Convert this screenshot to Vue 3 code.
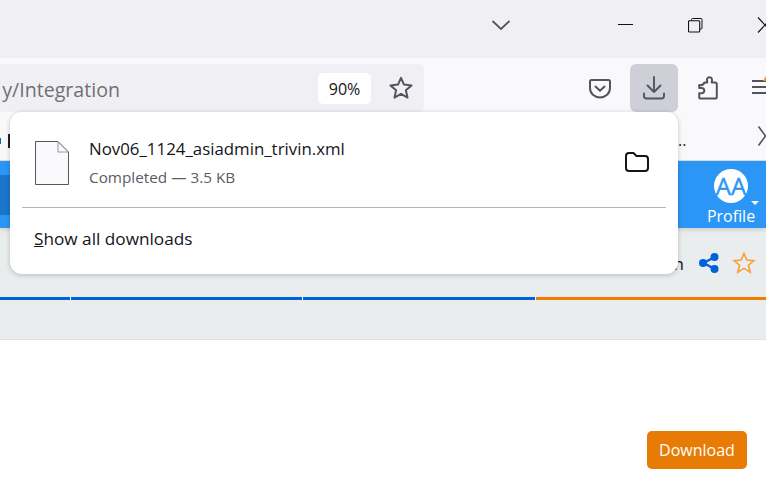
<template>
  <div class="window">
    <div class="titlebar">
      <svg class="chev" width="20" height="12" viewBox="0 0 20 12"><path d="M1.5 2 L10 10 L18.5 2" fill="none" stroke="#54545e" stroke-width="1.8"/></svg>
      <div class="min"></div>
      <svg class="restore" width="15" height="15" viewBox="0 0 15 15"><path d="M3.5 2.5 V1.5 Q3.5 .5 4.5 .5 H13 Q14 .5 14 1.5 V10 Q14 11 13 11 H12" fill="none" stroke="#111" stroke-width="1"/><rect x=".5" y="2.8" width="11.2" height="11.2" rx="1" fill="none" stroke="#111" stroke-width="1.1"/></svg>
      <svg class="close" width="16" height="16" viewBox="0 0 16 16"><path d="M1 .5 L15 15.5 M15 .5 L1 15.5" stroke="#111" stroke-width="1.1"/></svg>
    </div>

    <div class="toolbar">
      <div class="urlbar">
        <div class="urlslot"><span class="url">y/Integration</span></div>
        <span class="zoom">90%</span>
        <svg class="star" width="26" height="26" viewBox="0 0 26 26"><path d="M13 2.8 L16 9.6 L23.5 10.4 L17.9 15.3 L19.5 22.6 L13 18.9 L6.5 22.6 L8.1 15.3 L2.5 10.4 L10 9.6 Z" fill="none" stroke="#54545e" stroke-width="2" stroke-linejoin="round"/></svg>
      </div>
      <svg class="pocket" width="22" height="20" viewBox="0 0 22 20"><path d="M2.5 1 H19.5 Q21 1 21 2.5 V9 C21 14.5 16.5 18.5 11 18.5 C5.5 18.5 1 14.5 1 9 V2.5 Q1 1 2.5 1 Z" fill="none" stroke="#54545e" stroke-width="2"/><path d="M6.5 7.5 L11 11.8 L15.5 7.5" fill="none" stroke="#54545e" stroke-width="2" stroke-linecap="round" stroke-linejoin="round"/></svg>
      <div class="dl-btn">
        <svg width="22" height="24" viewBox="0 0 22 24"><path d="M11 1 V16 M4.5 9.5 L11 16 L17.5 9.5" fill="none" stroke="#54545e" stroke-width="1.9" stroke-linecap="round" stroke-linejoin="round"/><path d="M1 17.5 V20 Q1 22.5 3.5 22.5 H18.5 Q21 22.5 21 20 V17.5" fill="none" stroke="#54545e" stroke-width="1.9" stroke-linecap="round"/></svg>
      </div>
      <svg class="ext" width="20" height="24" viewBox="0 0 20 24"><path d="M6.5 6.5 H9.3 Q8 1.2 11.5 1.2 Q15 1.2 13.7 6.5 H17 Q18.8 6.5 18.8 8.3 V21 Q18.8 22.6 17 22.6 H2.8 Q1.2 22.6 1.2 21 V17.3 H3.5 Q6.3 17.3 6.3 14.6 Q6.3 12 3.5 12 H1.2 V9 Q5 9.8 6.5 6.5 Z" fill="none" stroke="#54545e" stroke-width="2" stroke-linejoin="round"/></svg>
      <div class="menu">
        <i></i><i></i><i></i>
        <b class="dot"></b>
      </div>
    </div>

    <div class="bookmarks">
      <span class="bm-dot"></span>
      <span class="bm-bar"></span>
      <span class="more">..</span>
      <svg class="next" width="10" height="22" viewBox="0 0 10 22"><path d="M1.5 1.5 L8.5 11 L1.5 20.5" fill="none" stroke="#54545e" stroke-width="1.6"/></svg>
    </div>

    <header class="appbar">
      <div class="brand"></div>
      <div class="profile">
        <div class="avatar">AA</div>
        <span class="caret"></span>
        <span class="plabel">Profile</span>
      </div>
    </header>

    <div class="subhead">
      <span class="tail">n</span>
      <svg width="22" height="22" viewBox="0 0 22 22"><path d="M16 5.5 L5.5 11 L16 16.5" fill="none" stroke="#0062d9" stroke-width="2.4"/><circle cx="16.5" cy="5" r="4" fill="#0062d9"/><circle cx="5" cy="11" r="4" fill="#0062d9"/><circle cx="16.5" cy="17" r="4" fill="#0062d9"/></svg>
      <svg class="fav" width="24" height="22" viewBox="0 0 24 22"><path d="M12 1.5 L14.8 8 L21.8 8.6 L16.5 13.2 L18.2 20.2 L12 16.4 L5.8 20.2 L7.5 13.2 L2.2 8.6 L9.2 8 Z" fill="none" stroke="#f5a23c" stroke-width="1.7" stroke-linejoin="miter"/></svg>
    </div>

    <div class="tabs">
      <span class="t1"></span><span class="t2"></span><span class="t3"></span><span class="t4"></span>
    </div>
    <div class="band"></div>

    <main class="card">
      <button class="download">Download</button>
    </main>

    <section class="panel">
      <div class="item">
        <svg class="file" width="34" height="44" viewBox="0 0 34 44"><path d="M.5 .5 H23 L33.5 11 V43.5 H.5 Z" fill="#f9f9fb" stroke="#55555c" stroke-width="1"/><path d="M23 .5 V11 H33.5" fill="none" stroke="#9a9aa0" stroke-width="1"/></svg>
        <div class="info">
          <div class="fname">Nov06_1124_asiadmin_trivin.xml</div>
          <div class="status">Completed — 3.5 KB</div>
        </div>
        <svg class="folder" width="24" height="20" viewBox="0 0 24 20"><path d="M1 4 Q1 1 4 1 H8.5 L11.5 4 H20 Q23 4 23 7 V16 Q23 19 20 19 H4 Q1 19 1 16 Z" fill="none" stroke="#15141a" stroke-width="2" stroke-linejoin="round"/></svg>
      </div>
      <div class="sep"></div>
      <div class="all"><u>S</u>how all downloads</div>
    </section>
  </div>
</template>

<script setup>
</script>

<style>
html, body { margin: 0; overflow: hidden; }
</style>

<style scoped>
.window {
  position: relative;
  width: 766px;
  height: 499px;
  overflow: hidden;
  background: #fff;
  font-family: "Open Sans", "Noto Sans", sans-serif;
  display: flex;
  flex-direction: column;
}
.titlebar {
  height: 58px;
  flex: none;
  background: #f0f0f4;
  display: flex;
  align-items: center;
  padding-bottom: 9px;
  box-sizing: border-box;
}
.chev { margin-left: 491px; flex: none; }
.min { width: 15px; height: 1px; background: #111; margin-left: 107px; margin-bottom: 1px; flex: none; }
.restore { margin-left: 55px; flex: none; margin-top: 1px; }
.close { margin-left: 54px; flex: none; }
.toolbar {
  height: 54px;
  flex: none;
  box-sizing: border-box;
  padding-top: 6px;
  background: #f9f9fb;
  display: flex;
  align-items: flex-start;
}
.urlbar {
  width: 424px;
  height: 48px;
  background: #f0f0f4;
  border-radius: 0 6px 6px 0;
  display: flex;
  align-items: center;
  flex: none;
}
.urlslot {
  width: 120px;
  display: flex;
  justify-content: flex-end;
  flex: none;
  margin-right: 198px;
}
.url {
  font-size: 19.6px;
  color: #6f6f76;
  white-space: nowrap;
  flex: none;
  margin-top: 2px;
}
.zoom {
  width: 53px;
  height: 31px;
  background: #fff;
  border-radius: 5px;
  font-size: 16px;
  line-height: 33px;
  text-align: center;
  color: #15141a;
}
.star { margin-left: 17px; }
.pocket { margin-left: 165px; margin-top: 15px; flex: none; }
.dl-btn {
  width: 48px;
  height: 48px;
  background: #cfcfd8;
  border-radius: 6px;
  margin-left: 19px;
  display: flex;
  align-items: center;
  justify-content: center;
  flex: none;
}
.ext { margin-left: 20px; margin-top: 12px; flex: none; }
.menu {
  position: relative;
  margin-left: 34px;
  margin-top: 16px;
  width: 20px;
  flex: none;
  display: flex;
  flex-direction: column;
  gap: 4px;
}
.menu i { display: block; height: 2px; background: #54545e; }
.dot {
  position: absolute;
  left: 11px;
  top: -6px;
  width: 0;
  height: 0;
  border-left: 4px solid transparent;
  border-right: 4px solid transparent;
  border-bottom: 7px solid #f79a1d;
}
.bookmarks {
  height: 49px;
  flex: none;
  background: #f9f9fb;
  display: flex;
  align-items: center;
  box-sizing: border-box;
  border-bottom: 1px solid #ddd;
}
.bm-dot { width: 1px; height: 6px; background: #169; flex: none; margin-top: 9px; }
.bm-bar { width: 2px; height: 14px; margin-left: 7px; margin-top: 9px; background: #222; flex: none; }
.more { margin-left: 668px; font-size: 16px; color: #222; margin-top: 8px; flex: none; }
.next { margin-left: 71px; flex: none; }
.appbar {
  height: 67px;
  flex: none;
  background: #2b96f5;
  display: flex;
  justify-content: space-between;
  align-items: center;
  box-shadow: 0 2px 4px rgba(0,0,0,.12);
  position: relative;
}
.brand { width: 10px; height: 40px; background: #1b76c9; }
.profile {
  position: relative;
  width: 60px;
  margin-right: 5px;
  padding-top: 6px;
  display: flex;
  flex-direction: column;
  align-items: center;
  color: #fff;
}
.avatar {
  width: 34px;
  height: 34px;
  border-radius: 50%;
  background: #fff;
  color: #2b96f5;
  font-size: 24px;
  line-height: 34px;
  text-align: center;
  white-space: nowrap;
  display: flex;
  justify-content: center;
  -webkit-text-stroke: 0.4px #2b96f5;
}
.caret {
  position: absolute;
  right: 2px;
  top: 38px;
  width: 0;
  height: 0;
  border-left: 4px solid transparent;
  border-right: 4px solid transparent;
  border-top: 4px solid #fff;
}
.plabel { font-size: 16px; line-height: 20px; margin-top: 3px; }
.subhead {
  height: 69px;
  flex: none;
  background: #eaeded;
  display: flex;
  align-items: center;
  justify-content: flex-end;
  padding-right: 10px;
  box-sizing: border-box;
  padding-top: 1px;
}
.tail { font-size: 17px; color: #15141a; margin-right: 14px; }
.fav { margin-left: 12px; }
.tabs {
  height: 3px;
  flex: none;
  display: flex;
  gap: 1px;
  background: #fff;
}
.t1 { width: 70px; background: #0062d9; }
.t2 { width: 231px; background: #0062d9; }
.t3 { width: 232px; background: #0062d9; }
.t4 { flex: 1; background: #ee7c05; }
.band { height: 39px; flex: none; background: #eaeded; border-bottom: 1px solid #e0e2e2; }
.card {
  flex: 1;
  display: flex;
  justify-content: flex-end;
  align-items: flex-start;
  padding: 91px 19px 0 0;
}
.download {
  width: 100px;
  height: 38px;
  background: #e87b05;
  border: 0;
  border-radius: 5px;
  color: #fff;
  font-family: inherit;
  font-size: 16px;
  padding: 0;
}
.panel {
  position: absolute;
  left: 10px;
  top: 112px;
  width: 668px;
  height: 162px;
  background: #fff;
  border-radius: 12px;
  box-shadow: 0 1px 5px rgba(0,0,0,.22);
  box-sizing: border-box;
  padding: 0 12px;
}
.item {
  height: 95px;
  display: flex;
  align-items: center;
  box-sizing: border-box;
  padding-left: 13px;
}
.file { flex: none; margin-top: 6px; }
.info { margin-left: 20px; flex: 1; padding-top: 4px; }
.fname { font-size: 16.85px; line-height: 24px; color: #15141a; }
.status { font-size: 15.3px; line-height: 20px; color: #5b5b66; margin-top: 6px; }
.folder { margin-right: 17px; margin-top: 4px; }
.sep { height: 1px; background: #b5b5b8; }
.all {
  font-size: 17.2px;
  line-height: 24px;
  color: #15141a;
  padding: 19px 0 0 12px;
}
</style>
